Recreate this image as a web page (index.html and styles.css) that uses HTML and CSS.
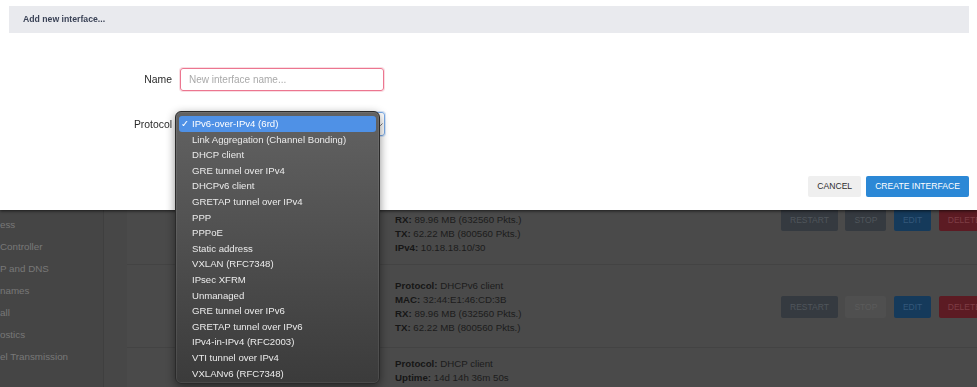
FILE: index.html
```html
<!DOCTYPE html>
<html lang="en">
<head>
<meta charset="utf-8">
<title>Add new interface</title>
<link rel="stylesheet" href="styles.css">
</head>
<body>
<div class="app">
  <aside class="sidebar">
    <ul class="nav">
      <li>ess</li>
      <li>Controller</li>
      <li>P and DNS</li>
      <li>names</li>
      <li>all</li>
      <li>ostics</li>
      <li>el Transmission</li>
    </ul>
  </aside>
  <main class="main">
    <div class="table">
      <div class="row row-first">
        <div class="cell-name"></div>
        <div class="cell-info">
          <div><b>Protocol:</b> Static address</div>
          <div><b>MAC:</b> 32:44:E1:46:CD:3A</div>
          <div><b>RX:</b> 89.96 MB (632560 Pkts.)</div>
          <div><b>TX:</b> 62.22 MB (800560 Pkts.)</div>
          <div><b>IPv4:</b> 10.18.18.10/30</div>
        </div>
        <div class="cell-actions">
          <span class="btn btn-restart">RESTART</span>
          <span class="btn btn-restart">STOP</span>
          <span class="btn btn-edit">EDIT</span>
          <span class="btn btn-delete">DELETE</span>
        </div>
      </div>
      <div class="row row-second">
        <div class="cell-name"></div>
        <div class="cell-info">
          <div><b>Protocol:</b> DHCPv6 client</div>
          <div><b>MAC:</b> 32:44:E1:46:CD:3B</div>
          <div><b>RX:</b> 89.96 MB (632560 Pkts.)</div>
          <div><b>TX:</b> 62.22 MB (800560 Pkts.)</div>
        </div>
        <div class="cell-actions">
          <span class="btn btn-restart">RESTART</span>
          <span class="btn btn-disabled">STOP</span>
          <span class="btn btn-edit">EDIT</span>
          <span class="btn btn-delete">DELETE</span>
        </div>
      </div>
      <div class="row row-third">
        <div class="cell-name"></div>
        <div class="cell-info">
          <div><b>Protocol:</b> DHCP client</div>
          <div><b>Uptime:</b> 14d 14h 36m 50s</div>
        </div>
        <div class="cell-actions"></div>
      </div>
    </div>
  </main>
</div>

<div class="modal">
  <div class="modal-title">Add new interface...</div>
  <div class="form">
    <div class="form-row form-row-name">
      <label class="form-label">Name</label>
      <div class="input">New interface name...</div>
    </div>
    <div class="form-row form-row-proto">
      <label class="form-label">Protocol</label>
      <div class="select">
        <svg class="select-arrow" width="5" height="5" viewBox="0 0 5 5"><path d="M0.5 1.5 L2.5 3.5 L4.5 1.5" fill="none" stroke="#555" stroke-width="0.8"/></svg>
      </div>
    </div>
  </div>
  <div class="modal-footer">
    <span class="mbtn mbtn-cancel">CANCEL</span>
    <span class="mbtn mbtn-create">CREATE INTERFACE</span>
  </div>
</div>

<ul class="dropdown">
  <li class="opt opt-selected"><span class="check">✓</span>IPv6-over-IPv4 (6rd)</li>
  <li class="opt">Link Aggregation (Channel Bonding)</li>
  <li class="opt">DHCP client</li>
  <li class="opt">GRE tunnel over IPv4</li>
  <li class="opt">DHCPv6 client</li>
  <li class="opt">GRETAP tunnel over IPv4</li>
  <li class="opt">PPP</li>
  <li class="opt">PPPoE</li>
  <li class="opt">Static address</li>
  <li class="opt">VXLAN (RFC7348)</li>
  <li class="opt">IPsec XFRM</li>
  <li class="opt">Unmanaged</li>
  <li class="opt">GRE tunnel over IPv6</li>
  <li class="opt">GRETAP tunnel over IPv6</li>
  <li class="opt">IPv4-in-IPv4 (RFC2003)</li>
  <li class="opt">VTI tunnel over IPv4</li>
  <li class="opt">VXLANv6 (RFC7348)</li>
</ul>
</body>
</html>
```

FILE: styles.css
```css
* { box-sizing: border-box; }

html, body {
  margin: 0;
  padding: 0;
  width: 977px;
  height: 387px;
  overflow: hidden;
  font-family: "Liberation Sans", Arial, sans-serif;
  background: #4a4a4a;
}

/* ---------- dimmed background application ---------- */
.app {
  display: flex;
  height: 387px;
}

.sidebar {
  width: 104px;
  flex: none;
  background: #454545;
  border-right: 1px solid #3f3f3f;
}

.nav {
  list-style: none;
  margin: 0;
  padding: 214px 0 0 0;
}

.nav li {
  height: 22px;
  line-height: 22px;
  font-size: 9.8px;
  color: #787878;
  white-space: nowrap;
}

.main {
  flex: 1;
  background: #474747;
  padding: 165px 0 0 23px;
  min-width: 0;
}

.table {
  width: 900px;
  background: #4a4a4a;
  height: 100%;
}

.row {
  display: grid;
  grid-template-columns: 268px 386px auto;
  border-bottom: 1px solid #434343;
}

.row-first { padding: 20px 0 9px; }
.row-second { padding: 14px 0 12px; }
.row-third { padding: 9px 0 0; border-bottom: none; }

.cell-info {
  font-size: 9.7px;
  line-height: 14px;
  color: #1c1c1c;
  white-space: nowrap;
}

.cell-info b { color: #161616; }

.cell-actions {
  display: flex;
  align-items: center;
  gap: 7.5px;
}

.btn {
  height: 22px;
  line-height: 22px;
  padding: 0 9px;
  border-radius: 2px;
  font-size: 8.5px;
  white-space: nowrap;
}

.btn-restart { background: #353a40; color: #50565c; }
.btn-disabled { background: #4f4f4f; color: #5b5b5b; }
.btn-edit { background: #153a5b; color: #34587a; }
.btn-delete { background: #5c1b23; color: #7e3d45; }

/* ---------- modal ---------- */
.modal {
  position: fixed;
  top: 0;
  left: 0;
  right: 0;
  height: 210px;
  background: #fff;
  box-shadow: 0 1px 3px rgba(0, 0, 0, 0.65);
  padding-top: 6px;
}

.modal-title {
  margin: 0 8px 0 9px;
  height: 27px;
  line-height: 27px;
  background: #e9eaee;
  padding-left: 14px;
  font-size: 8.7px;
  font-weight: bold;
  color: #3a4256;
}

.form {
  padding-top: 35px;
}

.form-row {
  display: flex;
  align-items: center;
  gap: 8px;
}

.form-row-proto { margin-top: 21px; }

.form-label {
  width: 172px;
  text-align: right;
  font-size: 10.4px;
  color: #2b2b2b;
}

.input {
  width: 204px;
  height: 23px;
  line-height: 21px;
  border: 1px solid #ec7690;
  box-shadow: 0 0 0 1px rgba(236, 118, 144, 0.25);
  border-radius: 3px;
  padding-left: 8px;
  font-size: 10px;
  color: #a9a9a9;
}

.select {
  width: 205px;
  height: 24px;
  border: 1px solid #7aaae6;
  box-shadow: 0 0 0 1px rgba(122, 170, 230, 0.3);
  border-radius: 3px;
  display: flex;
  align-items: center;
  justify-content: flex-end;
  padding-right: 1px;
}

.select-arrow { display: block; }

.modal-footer {
  position: absolute;
  right: 8px;
  top: 176px;
  display: flex;
  gap: 5px;
}

.mbtn {
  height: 21px;
  line-height: 21px;
  padding: 0 9px;
  border-radius: 2px;
  font-size: 8.6px;
  white-space: nowrap;
}

.mbtn-cancel { background: #efefef; color: #2e2e2e; }
.mbtn-create { background: #2b88d6; color: #fff; }

/* ---------- native select popup ---------- */
.dropdown {
  position: absolute;
  left: 175px;
  top: 111px;
  width: 205px;
  height: 273px;
  margin: 0;
  list-style: none;
  padding: 4px 3px;
  border-radius: 6px;
  border: 1px solid #2a2a2a;
  background: linear-gradient(#626262, #3b3b3b);
  box-shadow: inset 0 0 0 1px rgba(255, 255, 255, 0.08), 0 3px 10px rgba(0, 0, 0, 0.45);
}

.opt {
  height: 15.6px;
  line-height: 15.6px;
  padding-left: 13px;
  font-size: 9.6px;
  color: #ebebeb;
  white-space: nowrap;
  position: relative;
}

.opt-selected {
  background: #4f91e6;
  border-radius: 3px;
  color: #fff;
}

.check {
  position: absolute;
  left: 2px;
  top: 0;
  font-family: "DejaVu Sans", sans-serif;
  font-size: 9.5px;
}
```
